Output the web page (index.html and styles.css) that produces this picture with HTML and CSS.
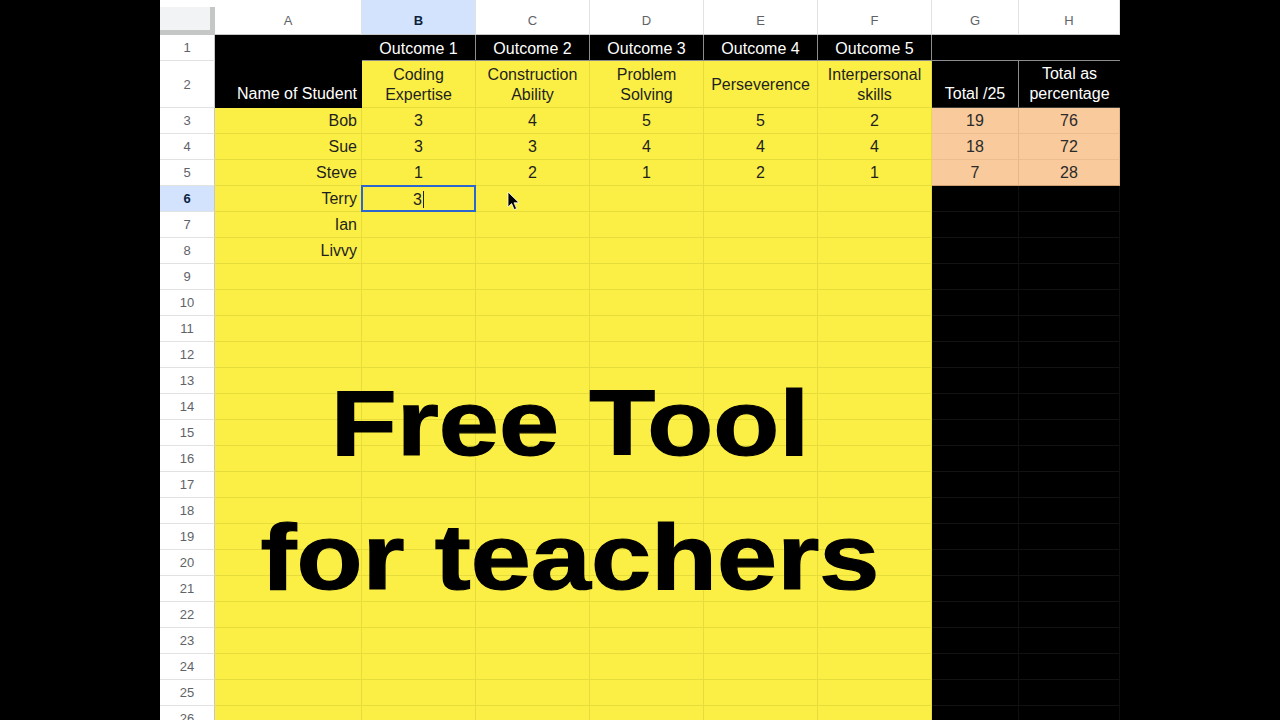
FILE: index.html
```html
<!DOCTYPE html>
<html lang="en">
<head>
<meta charset="utf-8">
<title>Free Tool for teachers</title>
<link rel="stylesheet" href="styles.css">
</head>
<body>
<div class="sheet">
  <div class="corner"><div class="corner-box"></div></div>
  <div class="hd">A</div><div class="hd sel">B</div><div class="hd">C</div><div class="hd">D</div><div class="hd">E</div><div class="hd">F</div><div class="hd">G</div><div class="hd">H</div>

  <div class="rn">1</div>
  <div class="k name">Name of Student</div>
  <div class="k out">Outcome 1</div><div class="k out">Outcome 2</div><div class="k out">Outcome 3</div><div class="k out">Outcome 4</div><div class="k out">Outcome 5</div>
  <div class="k wide"></div>

  <div class="rn tall">2</div>
  <div class="y sub">Coding<br>Expertise</div>
  <div class="y sub">Construction<br>Ability</div>
  <div class="y sub">Problem<br>Solving</div>
  <div class="y sub">Perseverence</div>
  <div class="y sub">Interpersonal<br>skills</div>
  <div class="k tot">Total /25</div>
  <div class="k tot last">Total as<br>percentage</div>

  <div class="rn">3</div><div class="y nm">Bob</div><div class="y">3</div><div class="y">4</div><div class="y">5</div><div class="y">5</div><div class="y">2</div><div class="o">19</div><div class="o last">76</div>
  <div class="rn">4</div><div class="y nm">Sue</div><div class="y">3</div><div class="y">3</div><div class="y">4</div><div class="y">4</div><div class="y">4</div><div class="o">18</div><div class="o last">72</div>
  <div class="rn">5</div><div class="y nm">Steve</div><div class="y">1</div><div class="y">2</div><div class="y">1</div><div class="y">2</div><div class="y">1</div><div class="o end">7</div><div class="o end last">28</div>
  <div class="rn sel">6</div><div class="y nm">Terry</div><div class="y active"><span class="caret">3</span></div><div class="y"></div><div class="y"></div><div class="y"></div><div class="y"></div><div class="e"></div><div class="e"></div>
  <div class="rn">7</div><div class="y nm">Ian</div><div class="y"></div><div class="y"></div><div class="y"></div><div class="y"></div><div class="y"></div><div class="e"></div><div class="e"></div>
  <div class="rn">8</div><div class="y nm">Livvy</div><div class="y"></div><div class="y"></div><div class="y"></div><div class="y"></div><div class="y"></div><div class="e"></div><div class="e"></div>
  <div class="rn">9</div><div class="y"></div><div class="y"></div><div class="y"></div><div class="y"></div><div class="y"></div><div class="y"></div><div class="e"></div><div class="e"></div>
  <div class="rn">10</div><div class="y"></div><div class="y"></div><div class="y"></div><div class="y"></div><div class="y"></div><div class="y"></div><div class="e"></div><div class="e"></div>
  <div class="rn">11</div><div class="y"></div><div class="y"></div><div class="y"></div><div class="y"></div><div class="y"></div><div class="y"></div><div class="e"></div><div class="e"></div>
  <div class="rn">12</div><div class="y"></div><div class="y"></div><div class="y"></div><div class="y"></div><div class="y"></div><div class="y"></div><div class="e"></div><div class="e"></div>
  <div class="rn">13</div><div class="y"></div><div class="y"></div><div class="y"></div><div class="y"></div><div class="y"></div><div class="y"></div><div class="e"></div><div class="e"></div>
  <div class="rn">14</div><div class="y"></div><div class="y"></div><div class="y"></div><div class="y"></div><div class="y"></div><div class="y"></div><div class="e"></div><div class="e"></div>
  <div class="rn">15</div><div class="y"></div><div class="y"></div><div class="y"></div><div class="y"></div><div class="y"></div><div class="y"></div><div class="e"></div><div class="e"></div>
  <div class="rn">16</div><div class="y"></div><div class="y"></div><div class="y"></div><div class="y"></div><div class="y"></div><div class="y"></div><div class="e"></div><div class="e"></div>
  <div class="rn">17</div><div class="y"></div><div class="y"></div><div class="y"></div><div class="y"></div><div class="y"></div><div class="y"></div><div class="e"></div><div class="e"></div>
  <div class="rn">18</div><div class="y"></div><div class="y"></div><div class="y"></div><div class="y"></div><div class="y"></div><div class="y"></div><div class="e"></div><div class="e"></div>
  <div class="rn">19</div><div class="y"></div><div class="y"></div><div class="y"></div><div class="y"></div><div class="y"></div><div class="y"></div><div class="e"></div><div class="e"></div>
  <div class="rn">20</div><div class="y"></div><div class="y"></div><div class="y"></div><div class="y"></div><div class="y"></div><div class="y"></div><div class="e"></div><div class="e"></div>
  <div class="rn">21</div><div class="y"></div><div class="y"></div><div class="y"></div><div class="y"></div><div class="y"></div><div class="y"></div><div class="e"></div><div class="e"></div>
  <div class="rn">22</div><div class="y"></div><div class="y"></div><div class="y"></div><div class="y"></div><div class="y"></div><div class="y"></div><div class="e"></div><div class="e"></div>
  <div class="rn">23</div><div class="y"></div><div class="y"></div><div class="y"></div><div class="y"></div><div class="y"></div><div class="y"></div><div class="e"></div><div class="e"></div>
  <div class="rn">24</div><div class="y"></div><div class="y"></div><div class="y"></div><div class="y"></div><div class="y"></div><div class="y"></div><div class="e"></div><div class="e"></div>
  <div class="rn">25</div><div class="y"></div><div class="y"></div><div class="y"></div><div class="y"></div><div class="y"></div><div class="y"></div><div class="e"></div><div class="e"></div>
  <div class="rn">26</div><div class="y"></div><div class="y"></div><div class="y"></div><div class="y"></div><div class="y"></div><div class="y"></div><div class="e"></div><div class="e"></div>

  <div class="title">Free Tool<br>for teachers</div>
  <svg class="pointer" width="14" height="20" viewBox="0 0 14 20"><path d="M1 1 L1 16 L4.6 12.6 L7.2 18.6 L9.6 17.6 L7 11.8 L12 11.8 Z" fill="#000" stroke="#fff" stroke-width="0.8" stroke-linejoin="round"/></svg>
</div>
</body>
</html>
```

FILE: styles.css
```css
html, body {
  margin: 0;
  padding: 0;
  background: #000;
  width: 1280px;
  height: 720px;
  overflow: hidden;
}

.sheet {
  position: relative;
  margin-left: 160px;
  width: 960px;
  height: 720px;
  overflow: hidden;
  display: grid;
  grid-template-columns: 55px 147px repeat(5, 114px) 87px 101px;
  grid-template-rows: 35px 26px 47px repeat(24, 26px);
  background: #fff;
  font-family: "Liberation Sans", Arial, sans-serif;
  font-size: 16px;
  color: #1f1f1f;
}

.sheet > div {
  box-sizing: border-box;
  display: flex;
  align-items: center;
  justify-content: center;
  border-right: 1px solid #e6dc3c;
  border-bottom: 1px solid #e6dc3c;
  white-space: nowrap;
  line-height: 20px;
  text-align: center;
  padding-top: 1px;
}

/* corner */
.sheet > .corner {
  background: #fff;
  border: 0;
  padding-top: 7px;
  align-items: stretch;
  justify-content: stretch;
}
.corner-box {
  flex: 1;
  background: #f1f3f4;
  border-right: 5px solid #c4c7c5;
  border-bottom: 5px solid #c4c7c5;
}

/* column headers */
.sheet > .hd {
  background: #fff;
  border-right: 1px solid #e1e3e1;
  border-bottom: 1px solid #c4c7c5;
  color: #5f6368;
  font-size: 13px;
  padding-top: 7px;
}
.sheet > .hd.sel {
  background: #d3e3fd;
  color: #0b1f3f;
  font-weight: 700;
}

/* row numbers */
.sheet > .rn {
  background: #fff;
  border-right: 1px solid #c4c7c5;
  border-bottom: 1px solid #e1e3e1;
  color: #5f6368;
  font-size: 13px;
}
.sheet > .rn.sel {
  background: #d3e3fd;
  color: #0b1f3f;
  font-weight: 700;
}

/* yellow cells */
.sheet > .y {
  background: #fbef45;
}
.sheet > .nm {
  justify-content: flex-end;
  padding-right: 4px;
}
.sheet > .sub {
  padding-top: 1px;
}

/* black header cells */
.sheet > .k {
  background: #000;
  color: #fff;
  border-right: 1px solid #8d8d8d;
  border-bottom: 1px solid #8d8d8d;
}
.sheet > .out {
  padding-top: 3px;
}
.sheet > .name {
  grid-row: span 2;
  justify-content: flex-end;
  align-items: flex-end;
  padding: 0 4px 3px 0;
  border-right-color: #000;
  border-bottom-color: #000;
}
.sheet > .wide {
  grid-column: span 2;
  border-right: 0;
}
.sheet > .tot {
  align-items: flex-end;
  padding-bottom: 3px;
  border-bottom-color: #3a3a3a;
}
.sheet > .last {
  border-right: 0;
}

/* orange totals */
.sheet > .o {
  background: #f9cb9c;
  color: #2a2a2a;
  border-right: 1px solid #e3b88c;
  border-bottom: 1px solid #ebbd8f;
}
.sheet > .o.end {
  border-bottom: 1px solid #cf9f70;
}

/* empty black */
.sheet > .e {
  background: #000;
  border-right: 1px solid #0f0f0f;
  border-bottom: 1px solid #121212;
}

/* active cell */
.sheet > .active {
  position: relative;
}
.sheet > .active::after {
  content: "";
  position: absolute;
  left: -1px;
  top: -1px;
  right: -1px;
  bottom: -1px;
  border: 2px solid #2c67cf;
}
.caret {
  border-right: 1px solid #1f1f1f;
  padding-right: 1px;
  line-height: 17px;
}

/* overlay title */
.sheet > .title {
  display: block;
  position: absolute;
  left: 55px;
  top: 356px;
  width: 710px;
  border: 0;
  padding: 0;
  text-align: center;
  font-family: "Liberation Sans", Arial, Helvetica, sans-serif;
  font-weight: 700;
  font-size: 92px;
  line-height: 134px;
  color: #000;
  -webkit-text-stroke: 1.2px #000;
  transform: scaleX(1.175);
  transform-origin: 50% 50%;
  white-space: nowrap;
  pointer-events: none;
}

.pointer {
  position: absolute;
  left: 347px;
  top: 191px;
}
```
